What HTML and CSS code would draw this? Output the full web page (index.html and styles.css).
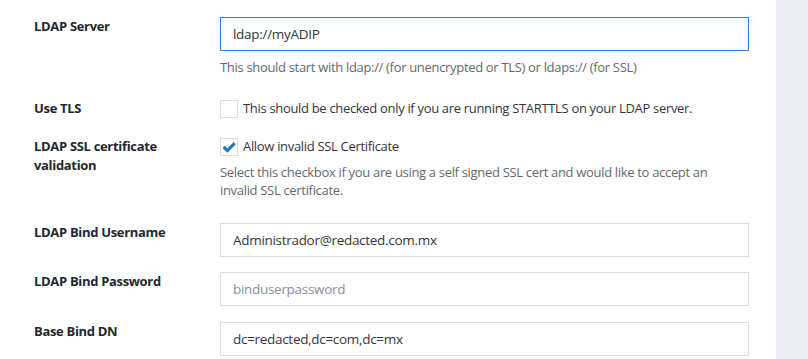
FILE: index.html
```html
<!DOCTYPE html>
<html lang="en">
<head>
    <meta charset="UTF-8" />
    <meta name="viewport" content="width=device-width, initial-scale=1.0" />
    <title>LDAP Settings</title>
    <link rel="stylesheet" href="styles.css">
</head>
<body>
  <div class="pagina">
    <form class="conteudo">
      <div class="linha">
        <label class="rotulo" for="servidor">LDAP Server</label>
        <div class="campo-area">
          <input type="text" id="servidor" class="campo foco" value="ldap://myADIP" />
          <p class="descricao">This should start with ldap:// (for unencrypted or TLS) or ldaps:// (for SSL)</p>
        </div>
      </div>

      <div class="linha linha-check">
        <div class="rotulo">Use TLS</div>
        <div class="campo-area">
          <label class="check-linha"><span class="caixa"></span>This should be checked only if you are running STARTTLS on your LDAP server.</label>
        </div>
      </div>

      <div class="linha linha-check">
        <div class="rotulo">LDAP SSL certificate<br>validation</div>
        <div class="campo-area">
          <label class="check-linha"><span class="caixa marcada">
            <svg width="16" height="16" viewBox="0 0 16 16"><path d="M1.5 9 L3.8 6.8 L6.4 9.4 L12.6 3 L14.8 5.2 L6.4 13.8 Z" fill="#1e7ab8"/></svg>
          </span>Allow invalid SSL Certificate</label>
          <p class="descricao estreita">Select this checkbox if you are using a self signed SSL cert and would like to accept an invalid SSL certificate.</p>
        </div>
      </div>

      <div class="linha linha-usuario">
        <label class="rotulo" for="usuario">LDAP Bind Username</label>
        <div class="campo-area">
          <input type="text" id="usuario" class="campo" value="Administrador@redacted.com.mx" />
        </div>
      </div>

      <div class="linha linha-junta">
        <label class="rotulo" for="senha">LDAP Bind Password</label>
        <div class="campo-area">
          <input type="text" id="senha" class="campo" placeholder="binduserpassword" />
        </div>
      </div>

      <div class="linha linha-junta ultima">
        <label class="rotulo" for="basedn">Base Bind DN</label>
        <div class="campo-area">
          <input type="text" id="basedn" class="campo" value="dc=redacted,dc=com,dc=mx" />
        </div>
      </div>
    </form>
    <div class="lateral"></div>
  </div>
</body>
</html>
```

FILE: styles.css
```css
body {
    margin: 0;
    background: #fff;
    font-family: "Open Sans", sans-serif;
    font-size: 13px;
    letter-spacing: -0.32px;
    color: #32373c;
}

.pagina {
    display: flex;
    height: 359px;
    overflow: hidden;
}

.conteudo {
    width: 776px;
    padding: 17px 0 0 34px;
    box-sizing: border-box;
}

.lateral {
    flex: 1;
    background: #eaedf1;
}

.linha {
    display: flex;
}

.rotulo {
    width: 186px;
    flex-shrink: 0;
    font-weight: bold;
    color: #23282d;
    line-height: 19px;
}

.campo-area {
    width: 529px;
}

.campo {
    display: block;
    width: 529px;
    height: 34px;
    box-sizing: border-box;
    border: 1px solid #ddd;
    padding: 0 12px;
    font-family: inherit;
    font-size: 13.5px;
    letter-spacing: -0.3px;
    color: #32373c;
    background: #fff;
    margin: 0;
}

.campo::placeholder {
    color: #8a8f94;
}

.campo.foco {
    border-color: #3582c4;
    outline: none;
}

.descricao {
    margin: 7px 0 0;
    color: #646970;
    line-height: 18px;
}

.descricao.estreita {
    max-width: 500px;
}

.linha-check {
    margin-top: 23px;
}

.linha-check + .linha-check {
    margin-top: 19px;
}

.check-linha {
    display: flex;
    align-items: center;
    line-height: 19px;
}

.caixa {
    width: 16px;
    height: 16px;
    border: 1px solid #ddd;
    margin-right: 5px;
    flex-shrink: 0;
    position: relative;
}

.caixa svg {
    position: absolute;
    left: 0;
    top: 0;
}

.linha-usuario {
    margin-top: 24px;
}

.linha-junta {
    margin-top: 15px;
}

.linha-junta.ultima {
    margin-top: 16px;
}
```
